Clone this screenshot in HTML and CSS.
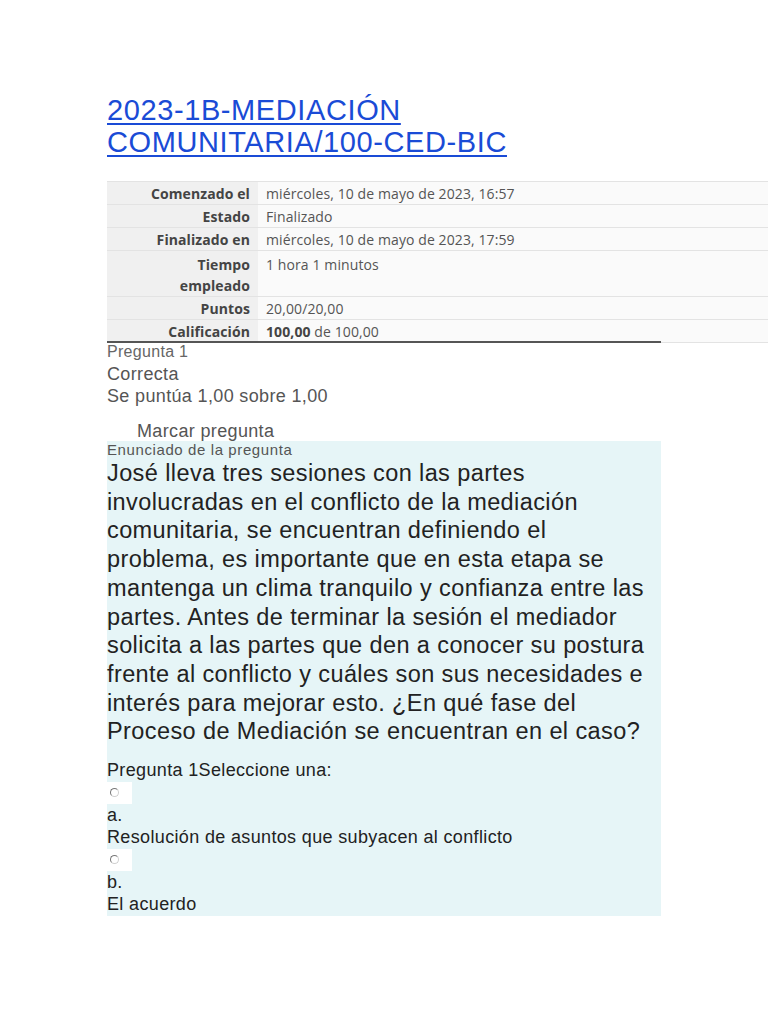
FILE: index.html
```html
<!DOCTYPE html>
<html lang="es">
<head>
<meta charset="utf-8">
<title>2023-1B-MEDIACIÓN COMUNITARIA/100-CED-BIC</title>
<link rel="stylesheet" href="styles.css">
</head>
<body>
<div class="page">
  <h1 class="title"><a href="#">2023-1B-MEDIACIÓN COMUNITARIA/100-CED-BIC</a></h1>
  <table class="summary">
    <tr><th>Comenzado el</th><td>miércoles, 10 de mayo de 2023, 16:57</td></tr>
    <tr><th>Estado</th><td>Finalizado</td></tr>
    <tr><th>Finalizado en</th><td>miércoles, 10 de mayo de 2023, 17:59</td></tr>
    <tr class="tall"><th>Tiempo empleado</th><td>1 hora 1 minutos</td></tr>
    <tr><th>Puntos</th><td>20,00/20,00</td></tr>
    <tr><th>Calificación</th><td><b>100,00</b> de 100,00</td></tr>
  </table>
  <div class="content">
    <div class="rule"></div>
    <div class="qno">Pregunta 1</div>
    <div class="state">Correcta</div>
    <div class="grade">Se puntúa 1,00 sobre 1,00</div>
    <div class="flag">Marcar pregunta</div>
    <div class="formulation">
      <div class="label">Enunciado de la pregunta</div>
      <div class="qtext">José lleva tres sesiones con las partes involucradas en el conflicto de la mediación comunitaria, se encuentran definiendo el problema, es importante que en esta etapa se mantenga un clima tranquilo y confianza entre las partes. Antes de terminar la sesión el mediador solicita a las partes que den a conocer su postura frente al conflicto y cuáles son sus necesidades e interés para mejorar esto. ¿En qué fase del Proceso de Mediación se encuentran en el caso?</div>
      <div class="prompt">Pregunta 1Seleccione una:</div>
      <div class="option">
        <div class="radio-box"><span class="radio"></span></div>
        <div class="opt-letter">a.</div>
        <div class="opt-text">Resolución de asuntos que subyacen al conflicto</div>
      </div>
      <div class="option">
        <div class="radio-box"><span class="radio"></span></div>
        <div class="opt-letter">b.</div>
        <div class="opt-text">El acuerdo</div>
      </div>
    </div>
  </div>
</div>
</body>
</html>
```
FILE: styles.css
```css
html, body {
  margin: 0;
  padding: 0;
  background: #ffffff;
  overflow: hidden;
}
.page {
  padding: 94px 0 0 107px;
  font-family: "Liberation Sans", Arial, sans-serif;
}
.title {
  margin: 0 0 23px 0;
  font-weight: normal;
  font-size: 29px;
  line-height: 32px;
  letter-spacing: 0.6px;
  width: 440px;
}
.title a {
  color: #1a4bd6;
  text-decoration: underline;
  text-decoration-thickness: 1.5px;
  text-underline-offset: 3px;
}
.summary {
  width: 661px;
  border-collapse: collapse;
  font-family: "Open Sans", sans-serif;
  font-size: 14px;
  line-height: 21px;
  letter-spacing: 0.1px;
  color: #555;
  border-top: 1px solid #e3e3e3;
}
.summary th, .summary td {
  padding: 1px 8px 0 8px;
  border-bottom: 1px solid #e3e3e3;
  vertical-align: top;
}
.summary .tall th, .summary .tall td {
  padding-top: 3px;
}
.summary th {
  width: 110px;
  padding-left: 33px;
  text-align: right;
  background: #f0f0f0;
  font-weight: bold;
  color: #444;
}
.summary td {
  background: #fafafa;
  text-align: left;
}
.summary td b {
  font-weight: bold;
  color: #444;
}
.content {
  width: 554px;
}
.rule {
  height: 2px;
  background: #555;
  margin-top: -2px;
  position: relative;
}
.qno {
  font-size: 16px;
  color: #666;
  line-height: 18px;
  letter-spacing: 0.3px;
}
.state, .grade, .flag {
  font-size: 18px;
  color: #555;
  line-height: 22px;
  letter-spacing: 0.35px;
}
.state {
  margin-top: 2px;
}
.flag {
  padding-left: 30px;
  margin-top: 15px;
  line-height: 19px;
}
.formulation {
  background: #e6f5f7;
}
.label {
  font-size: 15px;
  color: #555;
  line-height: 18px;
  letter-spacing: 0.6px;
}
.qtext {
  font-size: 23.5px;
  color: #222;
  line-height: 28.7px;
  letter-spacing: 0.4px;
  margin-bottom: 13px;
}
.prompt, .opt-letter, .opt-text {
  font-size: 18px;
  color: #222;
  line-height: 22.5px;
  letter-spacing: 0.35px;
}
.radio-box {
  width: 25px;
  height: 22px;
  background: #ffffff;
  display: flex;
  align-items: center;
  padding-left: 3px;
  box-sizing: border-box;
}
.radio {
  width: 7px;
  height: 7px;
  border-radius: 50%;
  border: 1px solid #777;
  border-right-color: #d0d0d0;
  border-bottom-color: #d0d0d0;
  background: #fff;
  display: block;
}
```
